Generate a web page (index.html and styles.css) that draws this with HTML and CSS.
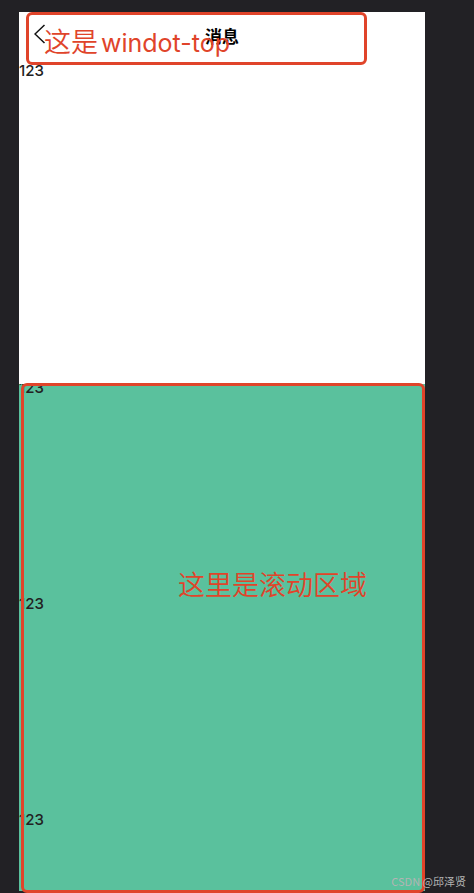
FILE: index.html
```
<!DOCTYPE html>
<html lang="zh-CN">
<head>
    <meta charset="UTF-8">
    <meta name="viewport" content="width=device-width, initial-scale=1.0">
    <title>消息</title>
    <link rel="stylesheet" href="styles.css">
</head>
<body>
    <main class="phone">
        <header class="window-top">
            <button class="back" type="button" aria-label="返回">
                <svg width="12" height="20" viewBox="0 0 12 20" fill="none" stroke="#111" stroke-width="1.5">
                    <path d="M10.5 1 L1 10 L10.5 19"/>
                </svg>
            </button>
            <h1>消息</h1>
            <div class="mark mark-top"><span>这是</span><span class="latin">windot-top</span></div>
        </header>

        <div class="content">123</div>

        <div class="scroll-wrap">
            <div class="scroll">
                <div class="item">123</div>
                <div class="item">123</div>
                <div class="item">123</div>
            </div>
            <div class="mark mark-scroll">这里是滚动区域</div>
        </div>
    </main>
    <div class="watermark">CSDN @邱泽贤</div>
</body>
</html>
```
FILE: styles.css
```
* {
    box-sizing: border-box;
}
body {
    position: relative;
    display: flex;
    min-height: 100vh;
    margin: 0;
    padding: 12px 49px 2px 19px;
    background-color: #222125;
    font-family: Inter, "Noto Sans CJK SC", sans-serif;
    font-size: 15px;
    font-weight: 500;
    line-height: 20px;
    color: #222;
}
.phone {
    flex: 1;
    display: flex;
    flex-direction: column;
    background-color: #fff;
}
.window-top {
    position: relative;
    display: grid;
    grid-template-columns: 48px 1fr 48px;
    align-items: center;
    height: 49px;
}
.window-top h1 {
    margin: 0;
    padding-top: 1px;
    font-size: 17px;
    font-weight: bold;
    text-align: center;
    color: #000;
}
.back {
    display: flex;
    padding: 0 0 6px 15px;
    border: 0;
    background: none;
}
.content {
    height: 323px;
}
.scroll-wrap {
    position: relative;
    flex: 1;
    display: flex;
}
.scroll {
    flex: 1;
    overflow: hidden;
    background-color: #5ac19d;
}
.item {
    height: 216px;
}
.item:first-child {
    margin-top: -6px;
}
.item:last-child {
    height: 20px;
}

/* red notes over the page */
.mark {
    position: absolute;
    display: flex;
    border: 3px solid #e0442a;
    border-radius: 6px;
    font-size: 27px;
    font-weight: 350;
    line-height: 32px;
    color: #e0442a;
}
.mark-top {
    top: 0;
    left: 7px;
    right: 58px;
    height: 53px;
    align-items: center;
    gap: 3px;
    padding: 8px 0 0 15px;
}
.latin {
    font-size: 25px;
    font-weight: 400;
}
.mark-scroll {
    top: -1px;
    right: 0;
    bottom: -2px;
    left: 2px;
    align-items: center;
    justify-content: flex-end;
    padding: 0 55px 104px 0;
}
.watermark {
    position: absolute;
    right: 8px;
    bottom: 2px;
    font-family: "Noto Sans CJK SC", sans-serif;
    font-size: 11px;
    font-weight: 400;
    color: #b4b4b4;
}
```
